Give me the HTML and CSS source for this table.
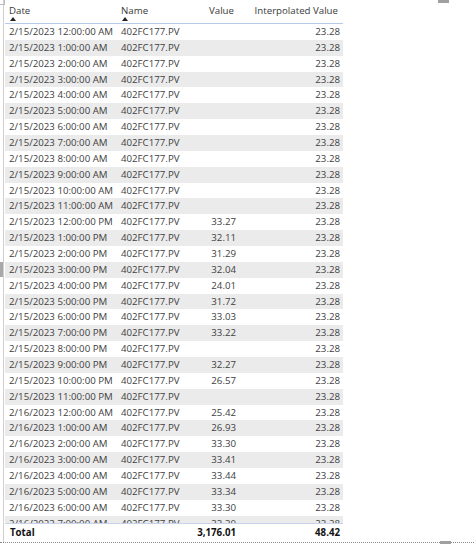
FILE: index.html
```html
<!DOCTYPE html>
<html>
<head>
<meta charset="utf-8">
<link rel="stylesheet" href="styles.css">
</head>
<body>
<div class="visual">
  <div class="corner-tl"></div>
  <div class="handle-top"></div>
  <div class="handle-left"></div>
  <div class="frame">
    <div class="table">
      <div class="head">
        <div class="hcell c-date">Date<span class="arrow"></span></div>
        <div class="hcell c-name">Name<span class="arrow"></span></div>
        <div class="hcell c-val num">Value</div>
        <div class="hcell c-int num">Interpolated Value</div>
      </div>
      <div class="body" id="body"></div>
      <div class="total">
        <div class="cell c-date">Total</div>
        <div class="cell c-name"></div>
        <div class="cell c-val num">3,176.01</div>
        <div class="cell c-int num">48.42</div>
      </div>
    </div>
  </div>
  <div class="bottom">
    <div class="handle-bottom"></div>
  </div>
</div>
<script>
  var vals = ["","","","","","","","","","","","","33.27","32.11","31.29","32.04","24.01","31.72","33.03","33.22","","32.27","26.57","","25.42","26.93","33.30","33.41","33.44","33.34","33.30","33.30"];
  function t(h){var ap=h<12?"AM":"PM";var hh=h%12;if(hh===0)hh=12;return hh+":00:00 "+ap;}
  var html="";
  for(var i=0;i<vals.length;i++){
    var d=i<24?"2/15/2023":"2/16/2023";
    var h=i%24;
    var cls="row"+(i%2?" alt":"")+(i===vals.length-1?" partial":"");
    html+='<div class="'+cls+'"><div class="cell c-date">'+d+' '+t(h)+'</div><div class="cell c-name">402FC177.PV</div><div class="cell c-val num">'+vals[i]+'</div><div class="cell c-int num">23.28</div></div>';
  }
  document.getElementById("body").innerHTML=html;
</script>
</body>
</html>
```
FILE: styles.css
```css
html, body {
  margin: 0;
  padding: 0;
  background: #fff;
}
.visual {
  position: relative;
  width: 474px;
  height: 553px;
  font-family: "Open Sans", "Noto Sans", sans-serif;
  font-size: 9.7px;
  color: #404040;
  overflow: hidden;
}
.corner-tl {
  position: absolute;
  left: 0;
  top: 0;
  width: 5px;
  height: 5px;
  border-right: 1px solid #bdbdbd;
  border-bottom: 1px solid #bdbdbd;
  box-sizing: border-box;
}
.handle-top {
  position: absolute;
  left: 438px;
  top: 0;
  width: 11px;
  height: 3px;
  background: #a0a0a0;
}
.handle-left {
  position: absolute;
  left: 0;
  top: 262px;
  width: 3px;
  height: 15px;
  background: #a8a8a8;
}
.frame {
  margin-left: 3px;
  border-left: 1px solid #cfcfcf;
  height: 542px;
  padding-left: 1px;
}
.table {
  width: 338px;
  display: flex;
  flex-direction: column;
}
.head {
  display: grid;
  grid-template-columns: 112px 73px 49px 104px;
  height: 24px;
  border-bottom: 1px solid #b7cbe8;
  box-sizing: border-box;
}
.hcell {
  position: relative;
  padding: 4px 4px 0 4px;
  line-height: 14px;
  color: #3a3a3a;
}
.arrow {
  position: absolute;
  left: 5px;
  top: 17px;
  width: 0;
  height: 0;
  border-left: 3px solid transparent;
  border-right: 3px solid transparent;
  border-bottom: 4px solid #222;
}
.hcell.num {
  text-align: right;
  padding-right: 5px;
}
.body {
  height: 499px;
  overflow: hidden;
}
.row, .total {
  display: grid;
  grid-template-columns: 112px 73px 49px 104px;
  height: 15.87px;
  align-items: center;
}
.row.alt {
  background: #ebebeb;
}
.row.partial {
  height: 7px;
  overflow: hidden;
  align-items: start;
}
.row.partial .cell {
  padding-top: 1px;
  height: 6px;
  line-height: 14px;
  overflow: hidden;
}
.cell {
  padding: 0 4px;
  line-height: 14px;
  white-space: nowrap;
}
.cell.num {
  text-align: right;
  padding-right: 3px;
}
.total {
  height: 18px;
  border-top: 1px solid #c5d4ea;
  font-weight: bold;
  color: #111;
}
.total .c-date {
  padding-left: 5px;
}
.bottom {
  position: relative;
  border-top: 1px dotted #8a8a8a;
  height: 0;
}
.handle-bottom {
  position: absolute;
  left: 440px;
  top: -2px;
  width: 11px;
  height: 3px;
  background: #a0a0a0;
}
```
